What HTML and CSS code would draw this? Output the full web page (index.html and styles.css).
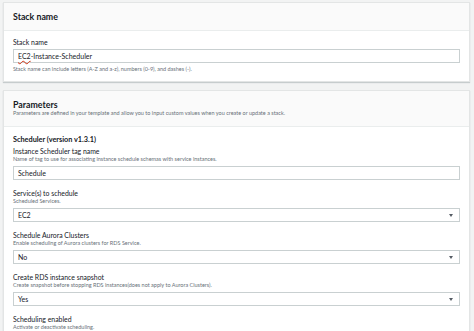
FILE: index.html
```html
<!DOCTYPE html>
<html lang="en">
<head>
<meta charset="utf-8">
<title>Specify stack details</title>
<link rel="stylesheet" href="styles.css">
</head>
<body>
<div class="page">
  <section class="card card-stack">
    <div class="card-header card-header-stack">
      <h2 class="card-title">Stack name</h2>
    </div>
    <div class="card-body card-body-stack">
      <div class="label">Stack name</div>
      <div class="input input-stack"><span><span class="typo">EC2</span>-Instance-Scheduler</span></div>
      <div class="hint hint-below">Stack name can include letters (A-Z and a-z), numbers (0-9), and dashes (-).</div>
    </div>
  </section>

  <section class="card card-params">
    <div class="card-header card-header-params">
      <h2 class="card-title">Parameters</h2>
      <div class="hint">Parameters are defined in your template and allow you to input custom values when you create or update a stack.</div>
    </div>
    <div class="card-body card-body-params">
      <h3 class="group-title">Scheduler (version v1.3.1)</h3>
      <div class="fields">
        <div class="field">
          <div class="label">Instance Scheduler tag name</div>
          <div class="hint">Name of tag to use for associating instance schedule schemas with service instances.</div>
          <div class="input"><span>Schedule</span></div>
        </div>
        <div class="field">
          <div class="label">Service(s) to schedule</div>
          <div class="hint">Scheduled Services.</div>
          <div class="input select"><span>EC2</span><span class="caret"></span></div>
        </div>
        <div class="field">
          <div class="label">Schedule Aurora Clusters</div>
          <div class="hint">Enable scheduling of Aurora clusters for RDS Service.</div>
          <div class="input select"><span>No</span><span class="caret"></span></div>
        </div>
        <div class="field">
          <div class="label">Create RDS instance snapshot</div>
          <div class="hint">Create snapshot before stopping RDS instances(does not apply to Aurora Clusters).</div>
          <div class="input select"><span>Yes</span><span class="caret"></span></div>
        </div>
        <div class="field">
          <div class="label">Scheduling enabled</div>
          <div class="hint">Activate or deactivate scheduling.</div>
        </div>
      </div>
    </div>
  </section>
</div>
</body>
</html>
```

FILE: styles.css
```css
html, body {
  margin: 0;
  padding: 0;
}
body {
  background: #f2f3f3;
  font-family: "Lato", "Open Sans", sans-serif;
  color: #16191f;
  height: 331px;
  overflow: hidden;
}
.page {
  padding: 2px 4px 0 3px;
  display: flex;
  flex-direction: column;
  gap: 8px;
}
.card {
  background: #ffffff;
  border: 1px solid #e3e5e5;
  box-shadow: 0 1px 1px rgba(0, 28, 36, 0.18);
}
.card-header {
  background: #fafafa;
  border-bottom: 1px solid #eaeded;
  padding: 0 9px;
}
.card-header-stack {
  height: 27px;
  display: flex;
  align-items: center;
}
.card-header-params {
  padding-top: 8px;
  padding-bottom: 9px;
}
.card-title {
  margin: 0;
  font-size: 8.8px;
  line-height: 11px;
  font-weight: 700;
}
.card-body {
  padding: 0 9px;
}
.card-body-stack {
  padding-top: 7px;
  padding-bottom: 8px;
}
.card-body-params {
  padding-top: 8px;
  padding-bottom: 10px;
}
.group-title {
  margin: 0;
  font-size: 7.3px;
  line-height: 10px;
  font-weight: 700;
}
.fields {
  margin-top: 2px;
  display: flex;
  flex-direction: column;
  gap: 9px;
}
.label {
  font-size: 6.9px;
  line-height: 9px;
}
.hint {
  font-size: 5.5px;
  line-height: 7px;
  color: #687078;
}
.hint-below {
  margin-top: 3px;
}
.input {
  margin-top: 3px;
  height: 12px;
  border: 1px solid #c9d0d1;
  background: #ffffff;
  padding: 0 4px;
  display: flex;
  align-items: center;
  justify-content: space-between;
  font-size: 7px;
  color: #16191f;
}
.input-stack {
  margin-top: 2px;
}
.typo {
  text-decoration: underline wavy #d13212;
  text-decoration-thickness: 0.5px;
  text-underline-offset: 1px;
}
.caret {
  width: 0;
  height: 0;
  border-left: 2.5px solid transparent;
  border-right: 2.5px solid transparent;
  border-top: 3px solid #545b64;
  margin-right: 2px;
}
```
